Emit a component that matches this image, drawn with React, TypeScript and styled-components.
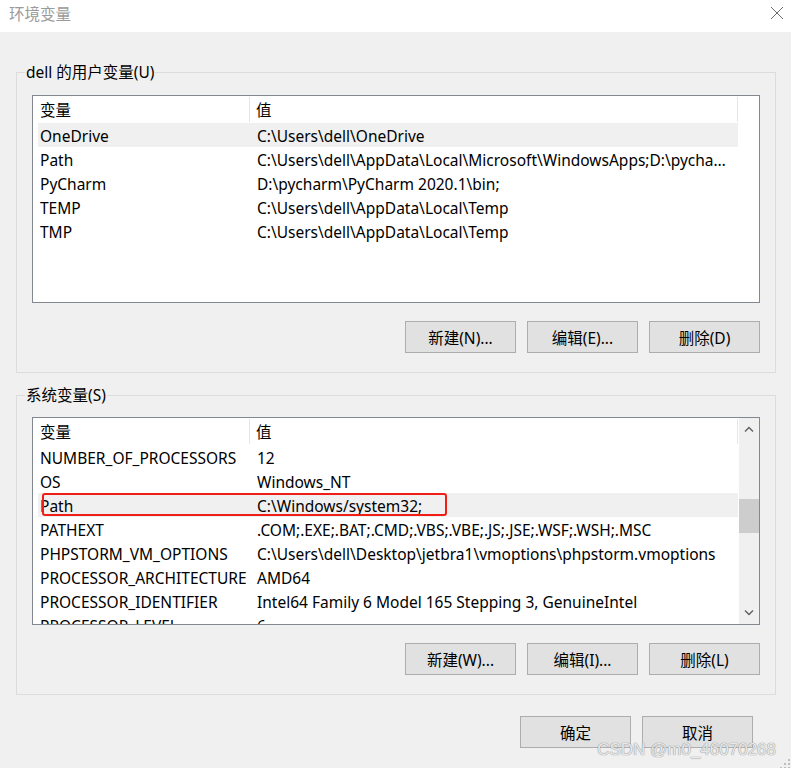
import styled, { createGlobalStyle } from "styled-components"

type Row = { name: string; value: string }

const USER_VARS: Row[] = [
  { name: "OneDrive", value: "C:\\Users\\dell\\OneDrive" },
  { name: "Path", value: "C:\\Users\\dell\\AppData\\Local\\Microsoft\\WindowsApps;D:\\pycharm\\PyCharm 2020.1\\bin;" },
  { name: "PyCharm", value: "D:\\pycharm\\PyCharm 2020.1\\bin;" },
  { name: "TEMP", value: "C:\\Users\\dell\\AppData\\Local\\Temp" },
  { name: "TMP", value: "C:\\Users\\dell\\AppData\\Local\\Temp" },
]

const SYSTEM_VARS: Row[] = [
  { name: "NUMBER_OF_PROCESSORS", value: "12" },
  { name: "OS", value: "Windows_NT" },
  { name: "Path", value: "C:\\Windows/system32;" },
  { name: "PATHEXT", value: ".COM;.EXE;.BAT;.CMD;.VBS;.VBE;.JS;.JSE;.WSF;.WSH;.MSC" },
  { name: "PHPSTORM_VM_OPTIONS", value: "C:\\Users\\dell\\Desktop\\jetbra1\\vmoptions\\phpstorm.vmoptions" },
  { name: "PROCESSOR_ARCHITECTURE", value: "AMD64" },
  { name: "PROCESSOR_IDENTIFIER", value: "Intel64 Family 6 Model 165 Stepping 3, GenuineIntel" },
  { name: "PROCESSOR_LEVEL", value: "6" },
]

const Global = createGlobalStyle`
  body {
    margin: 0;
    background: #f0f0f0;
    font-family: "Noto Sans", "Noto Sans CJK SC", sans-serif;
    font-size: 15.5px;
    color: #000;
  }
`

const VarList = ({ rows, selected, scroll }: { rows: Row[]; selected: number; scroll?: boolean }) => (
  <ListBox $top={scroll ? 12 : 13}>
    <Columns>
      <Header>
        <HeadCell $w={217}>变量</HeadCell>
        <HeadCell>值</HeadCell>
      </Header>
      {rows.map((r, i) => (
        <Item key={r.name} $sel={i === selected}>
          <NameCell>{r.name}</NameCell>
          <ValueCell>{r.value}</ValueCell>
        </Item>
      ))}
    </Columns>
    {scroll ? (
      <Scrollbar>
        <Arrow>
          <svg width="10" height="6" viewBox="0 0 10 6"><path d="M1 5.5 L5 1.5 L9 5.5" fill="none" stroke="#606060" strokeWidth="1.4" /></svg>
        </Arrow>
        <Track>
          <Thumb />
        </Track>
        <Arrow>
          <svg width="10" height="6" viewBox="0 0 10 6"><path d="M1 0.5 L5 4.5 L9 0.5" fill="none" stroke="#606060" strokeWidth="1.4" /></svg>
        </Arrow>
      </Scrollbar>
    ) : (
      <Filler />
    )}
    {scroll && <Marker />}
  </ListBox>
)

export default function App() {
  return (
    <Window>
      <Global />
      <TitleBar>
        <Title>环境变量</Title>
        <Close>
          <svg width="14" height="14" viewBox="0 0 14 14">
            <path d="M1 1 L13 13 M13 1 L1 13" stroke="#6b6b6b" strokeWidth="1" />
          </svg>
        </Close>
      </TitleBar>
      <Body>
        <Group>
          <Legend>dell 的用户变量(U)</Legend>
          <VarList rows={USER_VARS} selected={0} />
          <ButtonRow>
            <Button>新建(N)...</Button>
            <Button>编辑(E)...</Button>
            <Button>删除(D)</Button>
          </ButtonRow>
        </Group>
        <Group>
          <Legend>系统变量(S)</Legend>
          <VarList rows={SYSTEM_VARS} selected={2} scroll />
          <ButtonRow>
            <Button>新建(W)...</Button>
            <Button>编辑(I)...</Button>
            <Button>删除(L)</Button>
          </ButtonRow>
        </Group>
        <Footer>
          <Button>确定</Button>
          <Button>取消</Button>
        </Footer>
      </Body>
      <Watermark>CSDN @m0_46070268</Watermark>
      <Grip>
        <svg width="12" height="12" viewBox="0 0 12 12" fill="#bdbdbd">
          <rect x="9" y="1" width="2" height="2" />
          <rect x="5" y="5" width="2" height="2" />
          <rect x="9" y="5" width="2" height="2" />
          <rect x="1" y="9" width="2" height="2" />
          <rect x="5" y="9" width="2" height="2" />
          <rect x="9" y="9" width="2" height="2" />
        </svg>
      </Grip>
    </Window>
  )
}

const Window = styled.div`
  position: relative;
  width: 791px;
  height: 768px;
  overflow: hidden;
  background: #f0f0f0;
`
const TitleBar = styled.div`
  height: 32px;
  background: #fff;
  display: flex;
  align-items: center;
  justify-content: space-between;
  padding: 0 7px 0 9px;
`
const Title = styled.div`
  color: #9a9a9a;
  font-size: 15.5px;
  margin-top: -5px;
`
const Close = styled.div`
  display: flex;
  margin-top: -6px;
`
const Body = styled.div`
  display: flex;
  flex-direction: column;
  padding: 30px 15px 0 16px;
`
const Group = styled.fieldset`
  margin: 0 0 12px;
  padding: 0 15px 19px;
  border: 1px solid #dcdcdc;
  min-width: 0;
  &:last-of-type {
    margin-bottom: 0;
  }
`
const Legend = styled.legend`
  margin-left: -7px;
  padding: 0 1px;
  line-height: 20px;
  color: #000;
`
const ListBox = styled.div<{ $top: number }>`
  position: relative;
  margin-top: ${(p) => p.$top}px;
  height: 206px;
  border: 1px solid #828790;
  background: #fff;
  display: flex;
  overflow: hidden;
`
const Columns = styled.div`
  width: 705px;
  flex: none;
`
const Header = styled.div`
  display: flex;
  height: 27px;
  align-items: center;
`
const HeadCell = styled.div<{ $w?: number }>`
  ${(p) => (p.$w ? `width: ${p.$w}px; flex: none;` : "flex: 1;")}
  height: 25px;
  line-height: 27px;
  padding-left: 6px;
  box-sizing: border-box;
  border-right: 1px solid #e5e5e5;
  &:first-child {
    padding-left: 7px;
  }
`
const Item = styled.div<{ $sel: boolean }>`
  display: flex;
  height: 24px;
  line-height: 26px;
  margin-left: 5px;
  background: ${(p) => (p.$sel ? "#f0f0f0" : "transparent")};
  white-space: nowrap;
`
const NameCell = styled.div`
  width: 212px;
  flex: none;
  padding-left: 2px;
  box-sizing: border-box;
  overflow: hidden;
`
const ValueCell = styled.div`
  flex: 1;
  min-width: 0;
  padding: 0 6px 0 7px;
  overflow: hidden;
  text-overflow: ellipsis;
`
const Filler = styled.div`
  flex: 1;
`
const Scrollbar = styled.div`
  width: 21px;
  margin-left: 1px;
  background: #f0f0f0;
  display: flex;
  flex-direction: column;
`
const Arrow = styled.div`
  height: 22px;
  display: flex;
  align-items: center;
  justify-content: center;
`
const Track = styled.div`
  flex: 1;
  padding-top: 59px;
`
const Thumb = styled.div`
  height: 34px;
  background: #cdcdcd;
`
const Marker = styled.div`
  position: absolute;
  left: 9px;
  top: 75px;
  width: 405px;
  height: 23px;
  box-sizing: border-box;
  border: 2px solid #f01e14;
  border-radius: 3px;
`
const ButtonRow = styled.div`
  display: flex;
  justify-content: flex-end;
  gap: 11px;
  margin-top: 18px;
`
const Button = styled.button`
  width: 111px;
  height: 32px;
  background: #e1e1e1;
  border: 1px solid #adadad;
  font: inherit;
  color: #000;
  padding: 0;
`
const Footer = styled.div`
  display: flex;
  justify-content: flex-end;
  gap: 11px;
  margin-top: 21px;
  padding-right: 23px;
`
const Watermark = styled.div`
  position: absolute;
  right: 15px;
  bottom: 8px;
  font-family: "Liberation Sans", sans-serif;
  font-size: 17px;
  color: rgba(245, 245, 245, 0.9);
  text-shadow: 0 0 1px #909090, 0 0 1px #909090;
`
const Grip = styled.div`
  position: absolute;
  right: 0;
  bottom: -2px;
  display: flex;
`
